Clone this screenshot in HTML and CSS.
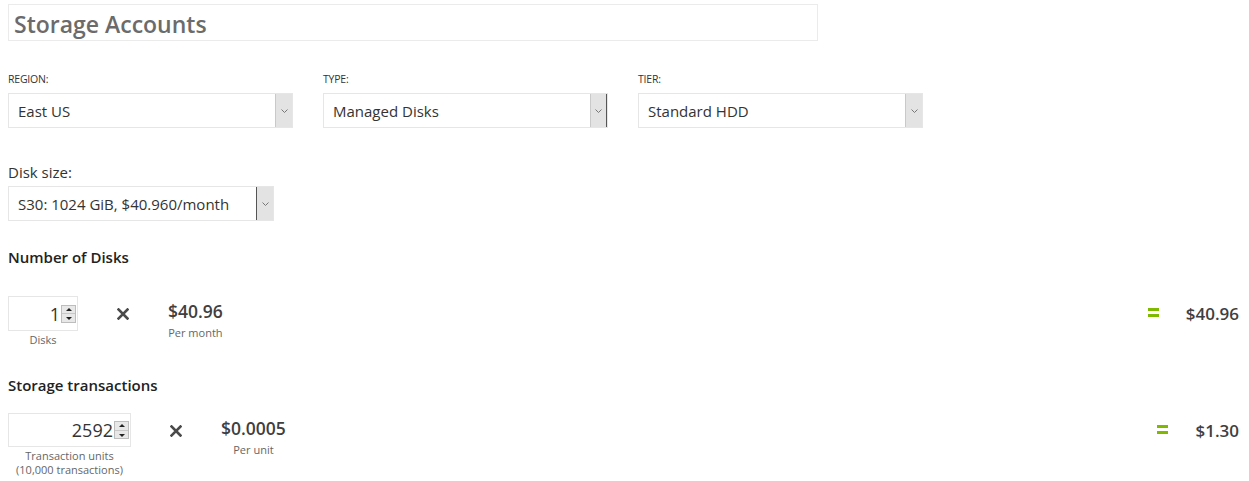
FILE: index.html
```html
<!DOCTYPE html>
<html lang="en">
<head>
  <meta charset="UTF-8">
  <title>Storage Accounts</title>
  <link rel="stylesheet" href="styles.css">
</head>
<body>
  <div class="page">
    <div class="title-box">Storage Accounts</div>

    <div class="filters">
      <div class="field">
        <div class="cap-label">REGION:</div>
        <div class="select wide">
          <span class="select-text">East US</span>
          <span class="select-arrow"><svg width="7" height="4" viewBox="0 0 7 4"><path d="M0.5 0.5L3.5 3.5L6.5 0.5" fill="none" stroke="#777" stroke-width="1"/></svg></span>
        </div>
      </div>
      <div class="field">
        <div class="cap-label">TYPE:</div>
        <div class="select wide">
          <span class="select-text">Managed Disks</span>
          <span class="select-arrow edge-right"><svg width="7" height="4" viewBox="0 0 7 4"><path d="M0.5 0.5L3.5 3.5L6.5 0.5" fill="none" stroke="#777" stroke-width="1"/></svg></span>
        </div>
      </div>
      <div class="field">
        <div class="cap-label">TIER:</div>
        <div class="select wide">
          <span class="select-text">Standard HDD</span>
          <span class="select-arrow"><svg width="7" height="4" viewBox="0 0 7 4"><path d="M0.5 0.5L3.5 3.5L6.5 0.5" fill="none" stroke="#777" stroke-width="1"/></svg></span>
        </div>
      </div>
    </div>

    <div class="disk-size">
      <div class="field-label">Disk size:</div>
      <div class="select narrow">
        <span class="select-text">S30: 1024 GiB, $40.960/month</span>
        <span class="select-arrow edge-left"><svg width="7" height="4" viewBox="0 0 7 4"><path d="M0.5 0.5L3.5 3.5L6.5 0.5" fill="none" stroke="#777" stroke-width="1"/></svg></span>
      </div>
    </div>

    <h3 class="section-title first">Number of Disks</h3>
    <div class="calc-row">
      <div class="qty-col">
        <div class="num-input small">
          <span class="num-value">1</span>
          <span class="spinner"><span class="spin up"></span><span class="spin down"></span></span>
        </div>
        <div class="sub-label">Disks</div>
      </div>
      <div class="times"><svg width="12" height="12" viewBox="0 0 12 12"><path d="M1.5 1.5L10.5 10.5M10.5 1.5L1.5 10.5" stroke="#4a4a4a" stroke-width="2.6" stroke-linecap="square"/></svg></div>
      <div class="price-col">
        <div class="price">$40.96</div>
        <div class="sub-label">Per month</div>
      </div>
      <div class="result">
        <span class="equals"></span>
        <span class="total">$40.96</span>
      </div>
    </div>

    <h3 class="section-title second">Storage transactions</h3>
    <div class="calc-row">
      <div class="qty-col">
        <div class="num-input large">
          <span class="num-value">2592</span>
          <span class="spinner"><span class="spin up"></span><span class="spin down"></span></span>
        </div>
        <div class="sub-label">Transaction units<br>(10,000 transactions)</div>
      </div>
      <div class="times"><svg width="12" height="12" viewBox="0 0 12 12"><path d="M1.5 1.5L10.5 10.5M10.5 1.5L1.5 10.5" stroke="#4a4a4a" stroke-width="2.6" stroke-linecap="square"/></svg></div>
      <div class="price-col">
        <div class="price">$0.0005</div>
        <div class="sub-label">Per unit</div>
      </div>
      <div class="result">
        <span class="equals"></span>
        <span class="total">$1.30</span>
      </div>
    </div>
  </div>
</body>
</html>
```

FILE: styles.css
```css
* { box-sizing: border-box; }
body { margin: 0; background: #fff; color: #333; font-family: "Open Sans", "Noto Sans", sans-serif; }
.page { padding: 4px 10px 0 8px; }

.title-box { width: 810px; height: 37px; border: 1px solid #ebebeb; padding: 3px 0 0 5px; font-size: 23px; font-weight: 600; color: #6b6b6b; line-height: 32px; }

.filters { display: flex; gap: 30px; margin-top: 31px; }
.field { display: flex; flex-direction: column; }
.cap-label { font-size: 10.5px; line-height: 14px; color: #333; margin-bottom: 7px; letter-spacing: -0.2px; }

.select { display: flex; align-items: stretch; height: 35px; border: 1px solid #e6e6e6; background: #fff; }
.select.wide { width: 285px; }
.select.narrow { width: 266px; }
.select-text { flex: 1; padding: 2px 0 0 9px; font-size: 15px; line-height: 31px; color: #333; white-space: nowrap; }
.select-arrow { width: 17px; display: flex; align-items: center; justify-content: center; background: #e3e3e3; border-left: 1px solid #c9c9c9; }
.select-arrow.edge-left { border-left: 1px solid #555; }
.select-arrow.edge-right { border-right: 1px solid #555; }

.disk-size { margin-top: 33px; }
.field-label { font-size: 15px; line-height: 20px; padding-top: 1px; color: #333; margin-bottom: 4px; }

.section-title { margin: 0; font-size: 15px; font-weight: 600; line-height: 20px; color: #222; }
.section-title.first { margin-top: 26px; margin-bottom: 29px; }
.section-title.second { margin-top: 28px; margin-bottom: 18px; }

.calc-row { display: flex; align-items: flex-start; }
.qty-col { display: flex; flex-direction: column; align-items: center; }
.num-input { display: flex; align-items: center; justify-content: flex-end; height: 35px; border: 1px solid #e6e6e6; padding-right: 1px; }
.num-input.small { width: 70px; }
.num-input.large { width: 123px; height: 34px; }
.num-value { font-size: 18px; color: #333; margin-right: 1px; }
.spinner { display: flex; flex-direction: column; width: 15px; height: 18px; border: 1px solid #bdbdbd; background: #e8e8e8; }
.spin { flex: 1; position: relative; }
.spin.up { border-bottom: 1px solid #c8c8c8; }
.spin.up::after, .spin.down::after { content: ""; position: absolute; left: 4px; border-left: 3px solid transparent; border-right: 3px solid transparent; }
.spin.up::after { top: 2px; border-bottom: 3px solid #222; }
.spin.down::after { top: 3px; border-top: 3px solid #222; }

.sub-label { margin-top: 2px; font-size: 11px; line-height: 14px; color: #666; text-align: center; }

.times { width: 90px; height: 35px; display: flex; align-items: center; justify-content: center; }
.price-col { display: flex; flex-direction: column; align-items: center; padding-top: 4px; }
.price { font-size: 17.5px; font-weight: 600; line-height: 22px; color: #3f3f3f; }
.price-col .sub-label { margin-top: 4px; }

.result { margin-left: auto; height: 35px; display: flex; align-items: center; gap: 27px; }
.equals { width: 11px; height: 9px; border-top: 3px solid #7fba00; border-bottom: 3px solid #7fba00; margin-top: -2px; }
.total { font-size: 17px; font-weight: 600; color: #3f3f3f; }
```
